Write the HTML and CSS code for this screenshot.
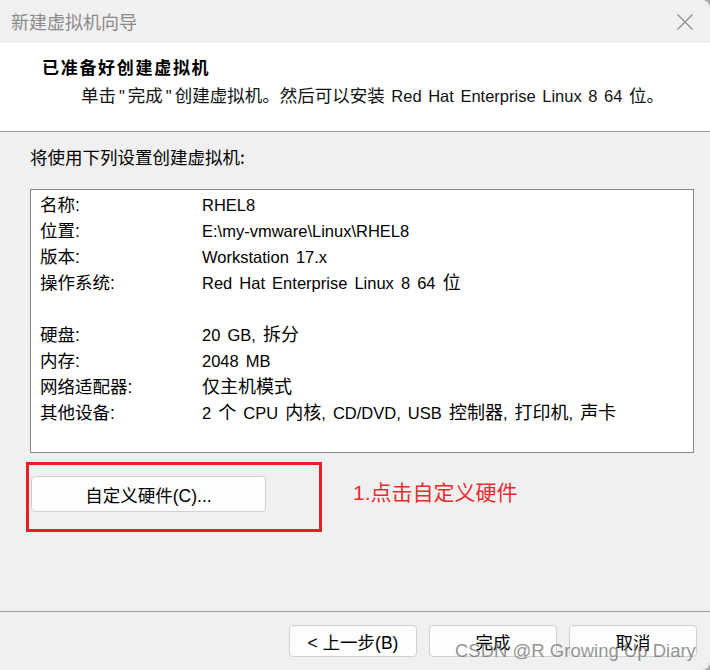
FILE: index.html
```html
<!DOCTYPE html>
<html lang="zh-CN">
<head>
<meta charset="utf-8">
<title>新建虚拟机向导</title>
<link rel="stylesheet" href="styles.css">
</head>
<body>
<div class="window">
  <div class="titlebar">
    <span class="title">新建虚拟机向导</span>
    <svg class="close" width="16" height="16" viewBox="0 0 16 16"><path d="M0.5 0.5 L15.5 15.5 M15.5 0.5 L0.5 15.5" stroke="#8a8a8a" stroke-width="1.2" fill="none"/></svg>
  </div>
  <div class="header">
    <div class="heading">已准备好创建虚拟机</div>
    <div class="sub"><span class="cj">单击</span><span class="q">"</span><span class="cj">完成</span><span class="q">"</span><span class="cj">创建虚拟机。然后可以安装</span> Red Hat Enterprise Linux 8 64 <span class="cj">位。</span></div>
  </div>
  <div class="main">
    <div class="intro">将使用下列设置创建虚拟机:</div>
    <div class="summary">
      <div class="lab">名称:</div><div class="val">RHEL8</div>
      <div class="lab">位置:</div><div class="val">E:\my-vmware\Linux\RHEL8</div>
      <div class="lab">版本:</div><div class="val">Workstation 17.x</div>
      <div class="lab">操作系统:</div><div class="val">Red Hat Enterprise Linux 8 64 <span class="cj">位</span></div>
      <div class="lab"></div><div class="val"></div>
      <div class="lab">硬盘:</div><div class="val">20 GB, <span class="cj">拆分</span></div>
      <div class="lab">内存:</div><div class="val">2048 MB</div>
      <div class="lab">网络适配器:</div><div class="val"><span class="cj">仅主机模式</span></div>
      <div class="lab">其他设备:</div><div class="val">2 <span class="cj">个</span> CPU <span class="cj">内核</span>, CD/DVD, USB <span class="cj">控制器</span>, <span class="cj">打印机</span>, <span class="cj">声卡</span></div>
    </div>
    <div class="custom-row">
      <div class="mark">
        <button class="btn custom">自定义硬件(C)...</button>
      </div>
      <div class="note">1.点击自定义硬件</div>
    </div>
  </div>
  <div class="footer">
    <button class="btn nav">&lt; 上一步(B)</button>
    <button class="btn nav">完成</button>
    <button class="btn nav">取消</button>
  </div>
  <div class="watermark">CSDN @R Growing Up Diary</div>
</div>
</body>
</html>
```
FILE: styles.css
```css
html, body {
  margin: 0;
  padding: 0;
  background: #a8a8a8;
}
body {
  font-family: "Liberation Sans", "Noto Sans CJK SC", sans-serif;
  color: #000;
}
.window {
  position: relative;
  width: 710px;
  height: 670px;
  background: #f0f0f0;
  border-radius: 0 8px 8px 0;
  display: flex;
  flex-direction: column;
  overflow: hidden;
}
.titlebar {
  height: 43px;
  flex: none;
  display: flex;
  align-items: center;
  justify-content: space-between;
  padding: 0 17px 0 11px;
}
.title {
  font-family: "Noto Sans CJK SC", sans-serif;
  font-size: 18px;
  color: #8a8a8a;
  line-height: 43px;
}
.close {
  display: block;
  width: 16px;
  height: 16px;
}
.header {
  flex: none;
  background: #fff;
  border-bottom: 1px solid #a0a0a0;
  padding: 11px 0 0 42px;
  box-sizing: content-box;
  height: 77px;
}
.heading {
  font-family: "Noto Sans CJK SC", sans-serif;
  font-weight: 700;
  font-size: 17px;
  letter-spacing: 1.7px;
  line-height: 26px;
}
.sub {
  margin: 2px 0 0 39px;
  font-size: 16.5px;
  word-spacing: 2px;
  line-height: 26px;
  white-space: nowrap;
  color: #111;
}
.q {
  padding: 0 3px;
}
.cj {
  font-family: "Noto Sans CJK SC", sans-serif;
  font-size: 17.5px;
  word-spacing: 0;
}
.main {
  flex: 1;
  padding: 12px 16px 0 30px;
}
.intro {
  font-family: "Noto Sans CJK SC", sans-serif;
  font-size: 17.5px;
  line-height: 26px;
}
.summary {
  margin-top: 19px;
  box-sizing: border-box;
  height: 264px;
  background: #fff;
  border: 1px solid #828790;
  padding: 2px 0 26px 9px;
  display: grid;
  grid-template-columns: 162px 1fr;
  grid-auto-rows: 26px;
  align-items: center;
}
.lab {
  font-family: "Liberation Sans", "Noto Sans CJK SC", sans-serif;
  font-size: 17.5px;
  line-height: 26px;
  white-space: nowrap;
}
.val {
  font-size: 16.5px;
  word-spacing: 2.5px;
  line-height: 26px;
  white-space: nowrap;
}
.val .cj {
  font-size: 18px;
  line-height: 1;
}
.custom-row {
  display: flex;
  align-items: flex-start;
  margin-top: 9px;
  margin-left: -4px;
}
.mark {
  width: 288px;
  border: 3px solid #ec1c24;
  padding: 11px 0 0 2px;
  box-sizing: content-box;
  height: 53px;
}
.btn {
  font-family: "Liberation Sans", "Noto Sans CJK SC", sans-serif;
  font-size: 17.5px;
  color: #000;
  background: #fdfdfd;
  border: 1px solid #d0d0d0;
  border-radius: 4px;
  padding: 0;
  margin: 0;
}
.custom {
  width: 235px;
  height: 36px;
  display: block;
}
.note {
  margin: 16px 0 0 31px;
  font-family: "Liberation Sans", "Noto Sans CJK SC", sans-serif;
  font-size: 21px;
  line-height: 30px;
  color: #ea2b2e;
}
.footer {
  flex: none;
  height: 45px;
  border-top: 1px solid #a0a0a0;
  padding: 13px 13px 0 0;
  display: flex;
  justify-content: flex-end;
  gap: 12px;
}
.nav {
  width: 128px;
  height: 32px;
}
.watermark {
  position: absolute;
  left: 455px;
  top: 639px;
  font-family: "Liberation Sans", sans-serif;
  font-size: 18.5px;
  line-height: 24px;
  color: rgba(105, 105, 105, 0.72);
  white-space: nowrap;
  pointer-events: none;
}
```
